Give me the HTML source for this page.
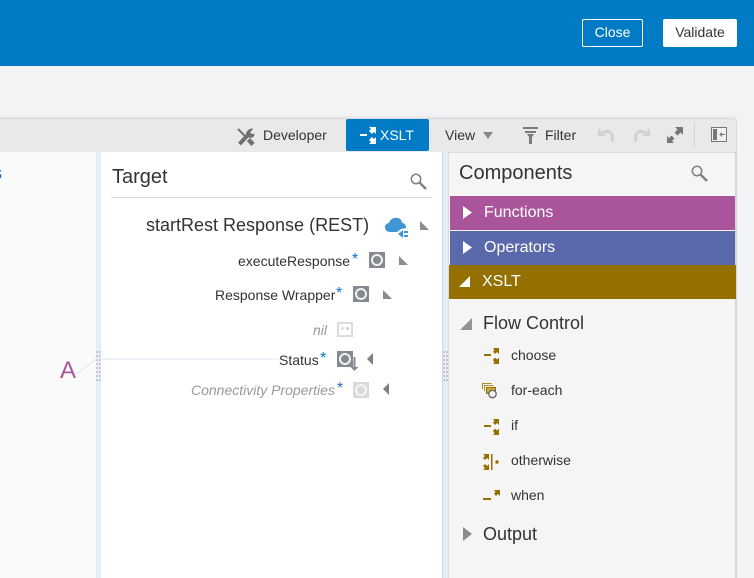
<!DOCTYPE html>
<html><head><meta charset="utf-8"><style>
html,body{margin:0;padding:0}
body{width:754px;height:578px;overflow:hidden;position:relative;background:#f2f3f5;font-family:"Liberation Sans",sans-serif;color:#333}
.a{position:absolute}
.t{position:absolute;white-space:nowrap;line-height:20px}
svg{position:absolute;overflow:visible}
.s{font-size:14px;color:#333}
.star{position:absolute;color:#0572ce;font-size:16px;line-height:16px}
.g{background:#858a90}
</style></head><body>
<div class="a" style="left:0;top:0;width:754px;height:66px;background:#027bc7"></div>
<div class="a" style="left:582px;top:19px;width:59px;height:26px;border:1px solid #fff;border-radius:2px"></div>
<div class="t" style="left:582px;top:22px;width:61px;text-align:center;font-size:14px;color:#fff">Close</div>
<div class="a" style="left:663px;top:19px;width:74px;height:28px;background:#fff;border-radius:2px"></div>
<div class="t" style="left:663px;top:22px;width:74px;text-align:center;font-size:14px;color:#333">Validate</div>

<div class="a" style="left:0;top:116px;width:737px;height:2px;background:#ebebeb"></div>
<div class="a" style="left:0;top:118px;width:736px;height:33px;background:#e9e9e9;border:1px solid #d9d9d9;border-left:0;border-radius:0 4px 0 0"></div>
<div class="a" style="left:346px;top:119px;width:83px;height:32px;background:#027bc7;border-radius:2px"></div>

<svg style="left:236px;top:127px" width="20" height="20" viewBox="0 0 20 20" fill="none" stroke="#707070"><path d="M2 2l9 9" stroke-width="2"/><path d="M12.500 12.500l4.500 5" stroke-width="4.500"/><path d="M3.500 17L11 9" stroke-width="4"/><path d="M10.500 9.500C9 5 13 1 17 2l-3 3 1 2 3 0C19 10 15 12 10.500 9.500z" fill="#707070" stroke-width=".5"/></svg>
<div class="t" style="left:263px;top:125px;font-size:14px;color:#333">Developer</div>
<svg style="left:360px;top:127px" width="16" height="17" viewBox="0 0 16 17" fill="#fff"><rect x="0" y="7" width="7" height="2"/><path d="M9 0h7v7l-2-2-2 2-3-3 2-2zM16 17H9l2-2-2-2 3-3 2 2 2-2z"/></svg>
<div class="t" style="left:380px;top:125px;font-size:14px;color:#fff">XSLT</div>
<div class="t" style="left:445px;top:125px;font-size:14px;color:#333">View</div>
<svg style="left:483px;top:132px" width="11" height="8"><path d="M0 0h10L5 7z" fill="#8a8a8a"/></svg>
<svg style="left:523px;top:126px" width="16" height="18" viewBox="0 0 16 18" fill="#7b7b7b"><rect x="0" y="1" width="15" height="2"/><rect x="2" y="5" width="11" height="2"/><path d="M4 8h7L9 11v7H6v-7z"/></svg>
<div class="t" style="left:545px;top:125px;font-size:14px;color:#333">Filter</div>
<svg style="left:598px;top:127px" width="18" height="16" viewBox="0 0 18 16"><path d="M0 1v8h8z" fill="#d2d2d2"/><path d="M5 5.500C11 2.500 16 6 14 14.500" fill="none" stroke="#d2d2d2" stroke-width="3"/></svg>
<svg style="left:632px;top:127px" width="18" height="16" viewBox="0 0 18 16"><path d="M18 1v8h-8z" fill="#d2d2d2"/><path d="M13 5.500C7 2.500 2 6 4 14.500" fill="none" stroke="#d2d2d2" stroke-width="3"/></svg>
<svg style="left:667px;top:127px" width="17" height="17" viewBox="0 0 17 17" fill="#777"><path d="M8 0h8v8l-2.500-2.500-3 3-3-3 3-3zM0 16V9l2 2 2.500-2.500 3 3L5 14l2 2z"/></svg>
<div class="a" style="left:694px;top:122px;width:1px;height:26px;background:#d4d4d4"></div>
<svg style="left:711px;top:127px" width="17" height="16" viewBox="0 0 17 16"><rect x=".5" y=".5" width="15" height="14" fill="#f0f0f0" stroke="#777"/><rect x="2" y="2" width="4" height="11" fill="#777"/><path d="M9 7.500h5M11 5.500l-2 2 2 2" stroke="#777" fill="none"/></svg>

<div class="a" style="left:0;top:152px;width:96px;height:426px;background:#fafafa"></div>
<div class="t" style="left:-7px;top:163px;font-size:18px;color:#0572ce">s</div>
<div class="a" style="left:96px;top:152px;width:5px;height:426px;background:#e3eefa"></div>
<div class="a" style="left:101px;top:152px;width:341px;height:426px;background:#fff"></div>
<div class="a" style="left:442px;top:152px;width:1px;height:426px;background:#d8d8d8"></div>
<div class="a" style="left:443px;top:152px;width:5px;height:426px;background:#e3eefa"></div>
<div class="a" style="left:448px;top:152px;width:289px;height:426px;background:#f5f5f5;border-left:1px solid #dcdcdc;border-right:2px solid #d5d5d5;border-top:1px solid #dcdcdc;box-sizing:border-box;border-radius:3px 3px 0 0"></div>

<svg style="left:96px;top:351px" width="6" height="30"><g fill="#c8c8c8"><rect width="2" height="2" y="0"/><rect x="3" width="2" height="2" y="0"/><rect width="2" height="2" y="4"/><rect x="3" width="2" height="2" y="4"/><rect width="2" height="2" y="8"/><rect x="3" width="2" height="2" y="8"/><rect width="2" height="2" y="12"/><rect x="3" width="2" height="2" y="12"/><rect width="2" height="2" y="16"/><rect x="3" width="2" height="2" y="16"/><rect width="2" height="2" y="20"/><rect x="3" width="2" height="2" y="20"/><rect width="2" height="2" y="24"/><rect x="3" width="2" height="2" y="24"/><rect width="2" height="2" y="28"/><rect x="3" width="2" height="2" y="28"/></g></svg>
<svg style="left:443px;top:351px" width="6" height="30"><g fill="#c8c8c8"><rect width="2" height="2" y="0"/><rect x="3" width="2" height="2" y="0"/><rect width="2" height="2" y="4"/><rect x="3" width="2" height="2" y="4"/><rect width="2" height="2" y="8"/><rect x="3" width="2" height="2" y="8"/><rect width="2" height="2" y="12"/><rect x="3" width="2" height="2" y="12"/><rect width="2" height="2" y="16"/><rect x="3" width="2" height="2" y="16"/><rect width="2" height="2" y="20"/><rect x="3" width="2" height="2" y="20"/><rect width="2" height="2" y="24"/><rect x="3" width="2" height="2" y="24"/><rect width="2" height="2" y="28"/><rect x="3" width="2" height="2" y="28"/></g></svg>

<div class="t" style="left:112px;top:167px;font-size:20px;color:#333">Target</div>
<div class="a" style="left:111px;top:197px;width:321px;height:1px;background:#d9d9d9"></div>
<svg style="left:410px;top:173px" width="18" height="18" viewBox="0 0 18 18"><circle cx="6" cy="6" r="4.700" fill="none" stroke="#808080" stroke-width="1.500"/><path d="M9.500 9.500l6.500 6.500" stroke="#808080" stroke-width="2.500"/></svg>

<div class="t" style="left:146px;top:215px;font-size:18px;color:#333">startRest Response (REST)</div>
<svg style="left:385px;top:216px" width="25" height="23" viewBox="0 0 25 23"><path d="M5 16c-3 0-5-2-5-5 0-2 2-4 4-4 1-4 5-6 9-5 3 1 4 3 4 5 3 0 4 2 4 5l-5 1-4 3z" fill="#3f96d6"/><path d="M13 18l5-4v8z" fill="#3f96d6"/><rect x="19" y="15" width="4" height="2" fill="#3f96d6"/><rect x="19" y="19" width="4" height="2" fill="#3f96d6"/></svg>
<svg style="left:420px;top:221px" width="9" height="9"><path d="M0 0v9h9z" fill="#8c8c8c"/></svg>

<div class="t s" style="left:238px;top:251px">executeResponse</div>
<div class="star" style="left:352px;top:252px">*</div>
<div class="a g" style="left:369px;top:252px;width:16px;height:16px"></div>
<div class="a" style="left:371px;top:254px;width:8px;height:8px;border:2px solid #f2f2f2;border-radius:50%"></div>
<svg style="left:399px;top:256px" width="9" height="9"><path d="M0 0v9h9z" fill="#8c8c8c"/></svg>

<div class="t s" style="left:215px;top:285px">Response Wrapper</div>
<div class="star" style="left:336px;top:286px">*</div>
<div class="a g" style="left:353px;top:286px;width:16px;height:16px"></div>
<div class="a" style="left:355px;top:288px;width:8px;height:8px;border:2px solid #f2f2f2;border-radius:50%"></div>
<svg style="left:383px;top:290px" width="9" height="9"><path d="M0 0v9h9z" fill="#8c8c8c"/></svg>

<div class="t" style="left:313px;top:320px;font-size:14px;font-style:italic;color:#999">nil</div>
<div class="a" style="left:337px;top:322px;width:12px;height:11px;border:2px solid #dcdcdc;background:#fff"></div>
<div class="a" style="left:341px;top:327px;width:3px;height:3px;background:#ddd;border-radius:50%"></div>
<div class="a" style="left:346px;top:327px;width:3px;height:3px;background:#ccc;border-radius:50%"></div>

<div class="t" style="left:60px;top:359px;font-size:24px;line-height:24px;color:#a9559b">A</div>
<svg style="left:76px;top:358px" width="204" height="18"><path d="M1 16L20 1H203" stroke="#dfe6ec" fill="none"/></svg>

<div class="t s" style="left:279px;top:350px">Status</div>
<div class="star" style="left:320px;top:351px">*</div>
<div class="a g" style="left:337px;top:351px;width:16px;height:16px"></div>
<div class="a" style="left:339px;top:353px;width:8px;height:8px;border:2px solid #f2f2f2;border-radius:50%"></div>
<svg style="left:350px;top:357px" width="9" height="15"><path d="M3.500 0h2v10h3L4.500 14 .5 10h3z" fill="#858a90"/></svg>
<svg style="left:367px;top:353px" width="6" height="12"><path d="M6 0v12L0 6z" fill="#808080"/></svg>

<div class="t" style="left:191px;top:380px;font-size:14px;font-style:italic;color:#999">Connectivity Properties</div>
<div class="star" style="left:337px;top:381px;color:#2a6fd0">*</div>
<div class="a" style="left:353px;top:382px;width:16px;height:16px;background:#d8dadc"></div>
<div class="a" style="left:355px;top:384px;width:8px;height:8px;border:2px solid #f6f6f6;border-radius:50%"></div>
<svg style="left:383px;top:383px" width="6" height="12"><path d="M6 0v12L0 6z" fill="#808080"/></svg>

<div class="t" style="left:459px;top:163px;font-size:20px;color:#333">Components</div>
<svg style="left:691px;top:165px" width="18" height="18" viewBox="0 0 18 18"><circle cx="6" cy="6" r="4.700" fill="none" stroke="#808080" stroke-width="1.500"/><path d="M9.500 9.500l6.500 6.500" stroke="#808080" stroke-width="2.500"/></svg>

<div class="a" style="left:450px;top:196px;width:285px;height:34px;background:#aa559b"></div>
<svg style="left:463px;top:206px" width="10" height="13"><path d="M0 0v13l9-6.500z" fill="#fff"/></svg>
<div class="t" style="left:484px;top:203px;font-size:16px;color:#fff">Functions</div>
<div class="a" style="left:450px;top:231px;width:285px;height:34px;background:#5a69ac"></div>
<svg style="left:463px;top:241px" width="10" height="13"><path d="M0 0v13l9-6.500z" fill="#fff"/></svg>
<div class="t" style="left:484px;top:238px;font-size:16px;color:#fff">Operators</div>
<div class="a" style="left:449px;top:265px;width:287px;height:34px;background:#937000"></div>
<svg style="left:459px;top:276px" width="12" height="12"><path d="M11 0v11H0z" fill="#fff"/></svg>
<div class="t" style="left:482px;top:272px;font-size:16px;color:#fff">XSLT</div>

<svg style="left:460px;top:318px" width="12" height="12"><path d="M12 0v12H0z" fill="#949494"/></svg>
<div class="t" style="left:483px;top:313px;font-size:18px;color:#333">Flow Control</div>

<svg style="left:484px;top:347px" width="16" height="17" viewBox="0 0 16 17" fill="#937000"><rect x="0" y="7" width="7" height="2"/><path d="M9 1h6v6l-2-2-2 2-2-2.500 1.500-1.500zM15 17H9l1.500-1.500L9 13l2-2.500 2 2 2-2z"/></svg>
<div class="t s" style="left:511px;top:345px">choose</div>

<svg style="left:482px;top:383px" width="16" height="16" viewBox="0 0 16 16" fill="none"><path d="M.5 6V.500h9M2.500 8V2.500h9" stroke="#b08d2a"/><rect x="4.500" y="4.500" width="9" height="6" fill="#c9a94a" stroke="#937000"/><circle cx="10.500" cy="11" r="3.700" stroke="#666" stroke-width="1.300" fill="#f5f5f5"/></svg>
<div class="t s" style="left:511px;top:380px">for-each</div>

<svg style="left:484px;top:418px" width="16" height="17" viewBox="0 0 16 17" fill="#937000"><rect x="0" y="7" width="7" height="2"/><path d="M9 1h6v6l-2-2-2 2-2-2.500 1.500-1.500zM15 17H9l1.500-1.500L9 13l2-2.500 2 2 2-2z"/></svg>
<div class="t s" style="left:511px;top:415px">if</div>

<svg style="left:482px;top:453px" width="17" height="18" viewBox="0 0 17 18" fill="#937000"><path d="M1 1h6v6L5 5 3 7 1 5l2-2zM7 17H1l2-2-2-2 2-2 2 2 2-2z"/><rect x="9" y="1" width="1.500" height="16"/><circle cx="15" cy="9" r="1.700"/></svg>
<div class="t s" style="left:511px;top:450px">otherwise</div>

<svg style="left:483px;top:489px" width="17" height="13" viewBox="0 0 17 13" fill="#937000"><rect x="0" y="9" width="8" height="2"/><path d="M11 1h6v6l-2-2-2 2-2-2.500 1.500-1.500z"/></svg>
<div class="t s" style="left:511px;top:485px">when</div>

<svg style="left:463px;top:527px" width="9" height="14"><path d="M0 0v14l9-7z" fill="#8c8c8c"/></svg>
<div class="t" style="left:483px;top:524px;font-size:18px;color:#333">Output</div>
</body></html>
